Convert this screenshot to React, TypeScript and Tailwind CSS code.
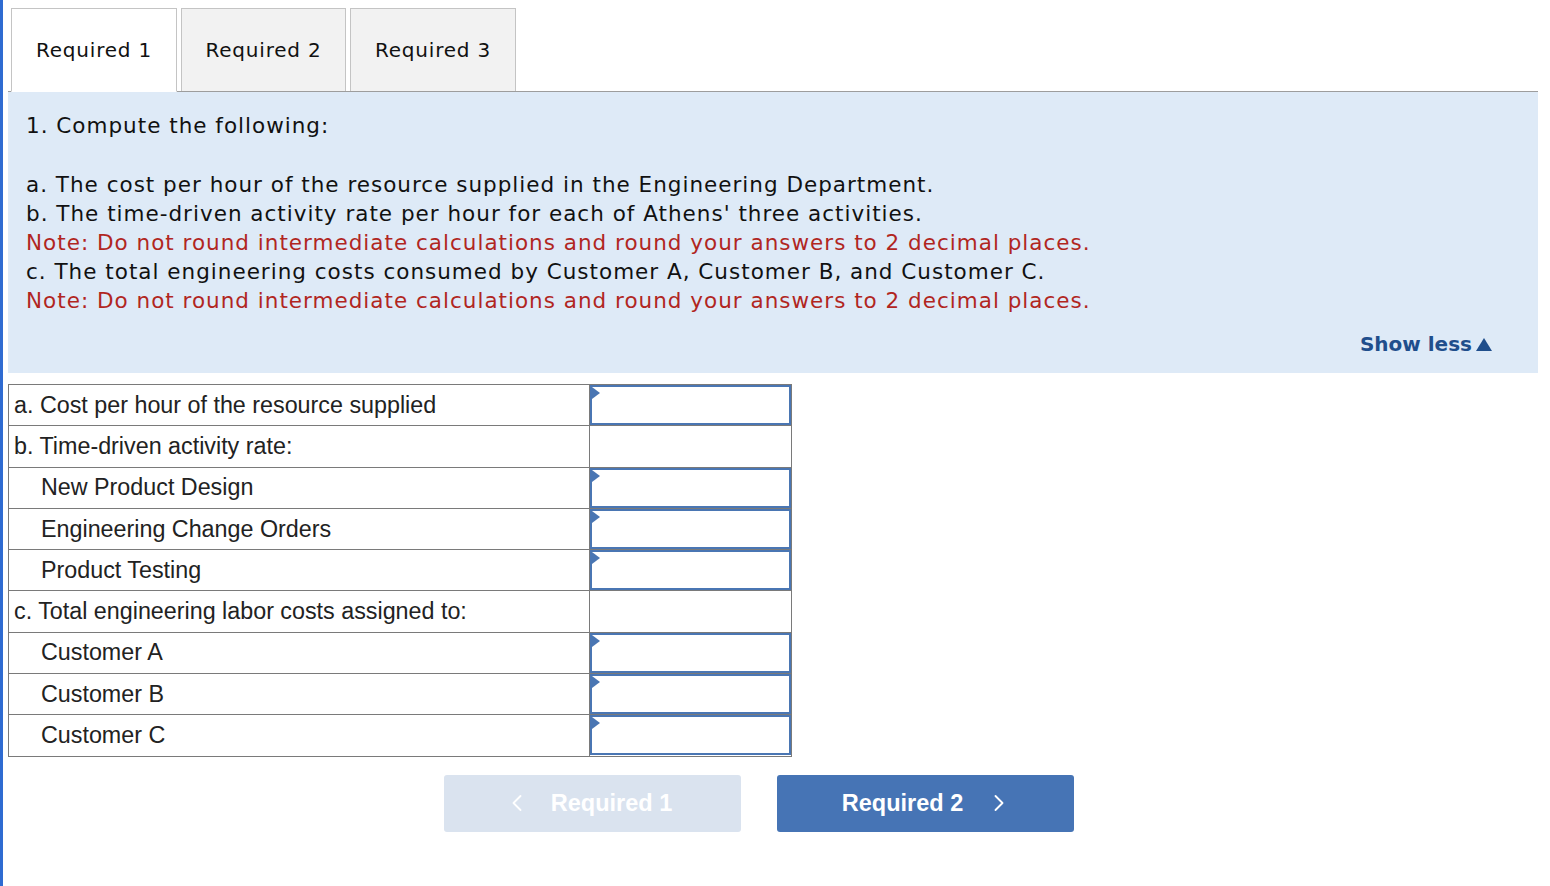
import { ChevronLeft, ChevronRight } from "lucide-react";

const rows: { label: string; indent?: boolean; input: boolean }[] = [
  { label: "a. Cost per hour of the resource supplied", input: true },
  { label: "b. Time-driven activity rate:", input: false },
  { label: "New Product Design", indent: true, input: true },
  { label: "Engineering Change Orders", indent: true, input: true },
  { label: "Product Testing", indent: true, input: true },
  { label: "c. Total engineering labor costs assigned to:", input: false },
  { label: "Customer A", indent: true, input: true },
  { label: "Customer B", indent: true, input: true },
  { label: "Customer C", indent: true, input: true },
];

function AnswerCell() {
  return (
    <div className="relative h-[40px] w-full border-2 border-[#4a76b3] bg-white">
      <span className="absolute left-0 top-0 h-0 w-0 border-y-[6px] border-l-[8px] border-y-transparent border-l-[#4a76b3]" />
    </div>
  );
}

export default function App() {
  return (
    <div className="flex min-h-[886px] bg-white">
      <div className="w-[3px] shrink-0 bg-[#2f6bd1]" />
      <div className="ml-[5px] w-[1530px] font-['DejaVu_Sans',Verdana,sans-serif]">
        {/* tabs */}
        <div className="flex gap-[4px] border-b border-[#9d9d9d] pl-[3px] pt-[8px] text-[20px] tracking-[0.8px] text-[#111]">
          <div className="-mb-px flex h-[84px] w-[166px] items-center justify-center border border-b-white border-[#c4c4c4] bg-white">
            Required 1
          </div>
          <div className="flex h-[83px] w-[165px] items-center justify-center border border-b-0 border-[#c4c4c4] bg-[#f2f2f2]">
            Required 2
          </div>
          <div className="flex h-[83px] w-[166px] items-center justify-center border border-b-0 border-[#c4c4c4] bg-[#f2f2f2]">
            Required 3
          </div>
        </div>

        {/* instructions */}
        <div className="h-[281px] bg-[#deeaf7] px-[18px] pt-[19px] text-[21.5px] leading-[29px] tracking-[1px] text-[#111]">
          <p>1. Compute the following:</p>
          <div className="mt-[30px]">
            <p>a. The cost per hour of the resource supplied in the Engineering Department.</p>
            <p>b. The time-driven activity rate per hour for each of Athens' three activities.</p>
            <p className="text-[#b1261f]">
              Note: Do not round intermediate calculations and round your answers to 2 decimal places.
            </p>
            <p>c. The total engineering costs consumed by Customer A, Customer B, and Customer C.</p>
            <p className="text-[#b1261f]">
              Note: Do not round intermediate calculations and round your answers to 2 decimal places.
            </p>
          </div>
          <div className="mt-[15px] flex justify-end pr-[28px] tracking-normal">
            <span className="flex items-center gap-[4px] text-[20px] font-bold text-[#1f4e8c]">
              Show less
              <svg width="16" height="13" viewBox="0 0 16 13">
                <path d="M8 0 L16 13 L0 13 Z" fill="#1f4e8c" />
              </svg>
            </span>
          </div>
        </div>

        {/* answer table */}
        <table className="mt-[11px] border-collapse font-['Liberation_Sans',Arial,sans-serif] text-[23.3px] text-[#222]">
          <tbody>
            {rows.map((r) => (
              <tr key={r.label}>
                <td
                  className={`h-[41.3px] w-[581px] border border-[#7a7a7a] py-0 ${r.indent ? "pl-[32px]" : "pl-[5px]"}`}
                >
                  {r.label}
                </td>
                <td className="w-[202px] border border-[#7a7a7a] p-0 align-top">
                  {r.input ? <AnswerCell /> : null}
                </td>
              </tr>
            ))}
          </tbody>
        </table>

        {/* navigation */}
        <div className="ml-[436px] mt-[18px] flex gap-[36px] font-['Liberation_Sans',Arial,sans-serif] text-[23.5px] font-bold text-white">
          <button className="flex h-[57px] w-[297px] items-center justify-center gap-[20px] rounded-[3px] bg-[#dae3ef] pr-[10px]">
            <ChevronLeft size={28} strokeWidth={1.6} />
            <span>Required 1</span>
          </button>
          <button className="flex h-[57px] w-[297px] items-center justify-center gap-[22px] rounded-[3px] bg-[#4674b5] pl-[4px]">
            <span>Required 2</span>
            <ChevronRight size={28} strokeWidth={1.6} />
          </button>
        </div>
      </div>
    </div>
  );
}
